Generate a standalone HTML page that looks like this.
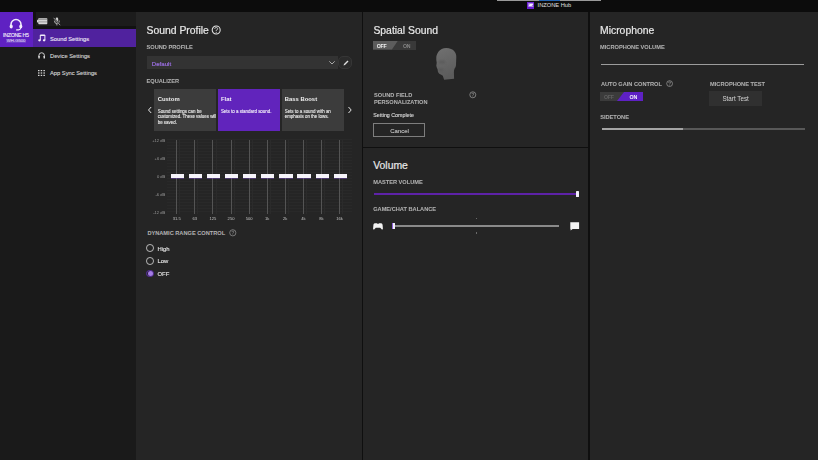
<!DOCTYPE html>
<html><head><meta charset="utf-8">
<style>
*{margin:0;padding:0;box-sizing:border-box}
html,body{width:818px;height:460px;overflow:hidden;background:#0c0c0c}
body{position:relative;font-family:"Liberation Sans",sans-serif;color:#ddd}
.a{position:absolute}
.t{position:absolute;white-space:nowrap;line-height:1}
.h{font-size:10.4px;color:#e8e8e8;-webkit-text-stroke:0.2px #e8e8e8;margin-top:1px}
.l{font-size:5.65px;font-weight:700;color:#b0b0b0;margin-top:0.8px}
.b{font-size:5.8px;color:#d8d8d8;-webkit-text-stroke:0.12px currentColor}
.l{-webkit-text-stroke:0.05px currentColor}
</style></head><body><div id="w" style="position:absolute;left:0;top:0;width:818px;height:460px;filter:blur(0.4px)">
<!-- top bar -->
<div class="a" style="left:0;top:0;width:818px;height:12px;background:#0c0c0c"></div>
<div class="a" style="left:497px;top:0;width:104px;height:1px;background:#9a9a9a"></div>
<div class="a" style="left:539px;top:0;width:21px;height:1px;background:#2463b0"></div>
<div class="a" style="left:527px;top:2.2px;width:7.3px;height:7px;background:#6a1fd0"></div>
<svg class="a" style="left:527px;top:2.2px" width="8" height="7" viewBox="0 0 8 7"><path d="M1.2 1.6 H6.2 L6.2 2.4 L4.6 3.8 H6.4 V4.6 H1.2 V3.8 L2.9 2.4 H1.2z" fill="#f4f0ff"/></svg>
<div class="t" style="left:537.6px;top:3px;font-size:5.7px;color:#e0e0e0">INZONE Hub</div>

<!-- sidebar -->
<div class="a" style="left:0;top:12px;width:136px;height:448px;background:#1a1a1a"></div>
<div class="a" style="left:0;top:12px;width:33px;height:34.5px;background:#5f21c2"></div>
<div class="a" style="left:33px;top:12px;width:103px;height:14px;background:#1c1c1c"></div>
<div class="a" style="left:33px;top:26px;width:103px;height:3px;background:#121212"></div>
<div class="a" style="left:33px;top:12px;width:2.5px;height:14px;background:#111"></div>
<div class="a" style="left:33px;top:29px;width:103px;height:17.5px;background:#50229e"></div>


<!-- sidebar content -->
<svg class="a" style="left:9px;top:18px" width="14" height="14" viewBox="0 0 14 14">
 <path d="M2 8 V6.6 A5 5 0 0 1 12 6.6 V8" fill="none" stroke="#f3eefc" stroke-width="1.5"/>
 <ellipse cx="2.2" cy="8.4" rx="1.55" ry="2" fill="#f3eefc"/>
 <ellipse cx="11.8" cy="8.4" rx="1.55" ry="2" fill="#f3eefc"/>
 <path d="M11.6 10 Q11.4 11.8 9.6 11.9 H7.6" fill="none" stroke="#f3eefc" stroke-width="1.1" stroke-linecap="round"/>
</svg>
<div class="t" style="left:3px;top:32.6px;font-size:5.3px;letter-spacing:-0.3px;color:#eee6f8;-webkit-text-stroke:0.15px #eee6f8">INZONE H5</div>
<div class="a" style="left:6px;top:38.8px;width:20px;height:4.6px;background:#6d3dc8"></div>
<div class="t" style="left:6.8px;top:39.2px;font-size:4.2px;color:#f1eaf9">WH-G500</div>

<svg class="a" style="left:36.7px;top:17.7px" width="11" height="7" viewBox="0 0 11 7">
 <rect x="1.3" y="0.2" width="9" height="6" rx="0.6" fill="#d8d8d8"/>
 <rect x="0" y="1.8" width="1.6" height="2.6" rx="0.4" fill="#d8d8d8"/>
 <g fill="#3a3a3a"><rect x="2.55" y="1.1500000000000001" width="0.9" height="0.9"/><rect x="4.55" y="1.1500000000000001" width="0.9" height="0.9"/><rect x="6.55" y="1.1500000000000001" width="0.9" height="0.9"/><rect x="8.55" y="1.1500000000000001" width="0.9" height="0.9"/><rect x="2.55" y="3.4499999999999997" width="0.9" height="0.9"/><rect x="4.55" y="3.4499999999999997" width="0.9" height="0.9"/><rect x="6.55" y="3.4499999999999997" width="0.9" height="0.9"/><rect x="8.55" y="3.4499999999999997" width="0.9" height="0.9"/></g></svg>
<svg class="a" style="left:53px;top:16.5px" width="8" height="9" viewBox="0 0 8 9">
 <rect x="2.6" y="0.6" width="2.6" height="4.6" rx="1.3" fill="#cfcfcf"/>
 <path d="M1.4 3.6 Q1.4 6.6 3.9 6.6 Q6.4 6.6 6.4 3.6 M3.9 6.6 V8.4" fill="none" stroke="#cfcfcf" stroke-width="0.8"/>
 <path d="M0.6 0.8 L7.2 8.2" stroke="#1c1c1c" stroke-width="1.4"/>
 <path d="M0.6 0.8 L7.2 8.2" stroke="#cfcfcf" stroke-width="0.7"/>
</svg>

<svg class="a" style="left:37.5px;top:33.5px" width="8" height="8" viewBox="0 0 8 8">
 <path d="M2.3 6.2 V1 H6.9 V6.2" fill="none" stroke="#f3eefb" stroke-width="1"/>
 <path d="M2.3 1 H6.9 V2 H2.3z" fill="#f3eefb"/>
 <ellipse cx="1.5" cy="6.3" rx="1.3" ry="1.1" fill="#f3eefb"/>
 <ellipse cx="6.1" cy="6.3" rx="1.3" ry="1.1" fill="#f3eefb"/>
</svg>
<div class="t b" style="left:50px;top:36.6px;font-size:5.75px;color:#ece6f6">Sound Settings</div>

<svg class="a" style="left:37.6px;top:51.6px" width="8" height="7" viewBox="0 0 8 7">
 <path d="M0.9 4.6 V3.5 A2.75 2.75 0 0 1 6.4 3.5 V4.6" fill="none" stroke="#d8d8d8" stroke-width="0.95"/>
 <rect x="0.3" y="3.8" width="1.5" height="2.7" rx="0.5" fill="#d8d8d8"/>
 <rect x="5.5" y="3.8" width="1.5" height="2.7" rx="0.5" fill="#d8d8d8"/>
</svg>
<div class="t b" style="left:50px;top:53.9px;font-size:5.75px;color:#d6d6d6">Device Settings</div>

<svg class="a" style="left:38px;top:69.5px" width="7" height="6" viewBox="0 0 7 6"><g fill="#d8d8d8"><rect x="0" y="0" width="1.5" height="1.2"/><rect x="2.7" y="0" width="1.5" height="1.2"/><rect x="5.4" y="0" width="1.5" height="1.2"/><rect x="0" y="2.4" width="1.5" height="1.2"/><rect x="2.7" y="2.4" width="1.5" height="1.2"/><rect x="5.4" y="2.4" width="1.5" height="1.2"/><rect x="0" y="4.8" width="1.5" height="1.2"/><rect x="2.7" y="4.8" width="1.5" height="1.2"/><rect x="5.4" y="4.8" width="1.5" height="1.2"/></g></svg>
<div class="t b" style="left:50px;top:70.6px;font-size:5.75px;color:#d6d6d6">App Sync Settings</div>

<!-- panels -->
<div class="a" style="left:136px;top:12px;width:226px;height:448px;background:#252525"></div>
<div class="a" style="left:362px;top:12px;width:1px;height:448px;background:#0f0f0f"></div>
<div class="a" style="left:363px;top:12px;width:226px;height:135px;background:#252525"></div>
<div class="a" style="left:363px;top:147px;width:226px;height:1px;background:#0f0f0f"></div>
<div class="a" style="left:363px;top:148px;width:226px;height:312px;background:#252525"></div>
<div class="a" style="left:588.4px;top:12px;width:1.2px;height:448px;background:#0f0f0f"></div>
<div class="a" style="left:589.6px;top:12px;width:228.4px;height:448px;background:#252525"></div>

<!-- titles -->
<div class="t h" style="left:146.5px;top:25px">Sound Profile</div>
<div class="t h" style="left:373.4px;top:25px">Spatial Sound</div>
<div class="t h" style="left:600px;top:25px">Microphone</div>
<div class="t h" style="left:373.2px;top:159.8px">Volume</div>

<!-- labels -->
<div class="t l" style="left:146.5px;top:44.7px">SOUND PROFILE</div>
<div class="t l" style="left:146.5px;top:78.2px">EQUALIZER</div>
<div class="t l" style="left:147.4px;top:230.2px">DYNAMIC RANGE CONTROL</div>
<div class="t l" style="left:374px;top:91.8px">SOUND FIELD</div>
<div class="t l" style="left:374px;top:99.4px">PERSONALIZATION</div>
<div class="t l" style="left:373.2px;top:179.3px">MASTER VOLUME</div>
<div class="t l" style="left:373.2px;top:206.3px">GAME/CHAT BALANCE</div>
<div class="t l" style="left:600.1px;top:44.7px">MICROPHONE VOLUME</div>
<div class="t l" style="left:600.9px;top:81.2px">AUTO GAIN CONTROL</div>
<div class="t l" style="left:710.1px;top:81px">MICROPHONE TEST</div>
<div class="t l" style="left:600.2px;top:114.5px">SIDETONE</div>


<!-- sound profile panel -->
<svg class="a" style="left:211px;top:25px" width="11" height="10" viewBox="0 0 11 10">
 <circle cx="5.2" cy="5" r="4.0" fill="none" stroke="#e4e4e4" stroke-width="1.05"/>
 <path d="M3.7 3.9 Q3.7 2.5 5.2 2.5 Q6.7 2.5 6.7 3.8 Q6.7 4.7 5.2 5.3 V6.2" fill="none" stroke="#e0e0e0" stroke-width="0.8"/>
 <circle cx="5.2" cy="7.4" r="0.5" fill="#e0e0e0"/>
</svg>
<div class="a" style="left:146.5px;top:56px;width:191.5px;height:12.6px;background:#333"></div>
<div class="t b" style="left:151.8px;top:60.6px;font-size:6.1px;color:#9a6ee0;-webkit-text-stroke:0.2px #9a6ee0">Default</div>
<svg class="a" style="left:328px;top:59.5px" width="8" height="6" viewBox="0 0 8 6">
 <path d="M1.3 1.3 L4 4 L6.7 1.3" fill="none" stroke="#d0d0d0" stroke-width="0.75"/>
</svg>
<div class="a" style="left:338.3px;top:56.4px;width:13.4px;height:13px;background:#2b2b2b;border:0.6px solid #363636;border-radius:5px"></div>
<svg class="a" style="left:342px;top:58.5px" width="8" height="8" viewBox="0 0 8 8">
 <path d="M1.5 6.5 L2 5 L5.5 1.5 L6.5 2.5 L3 6 z" fill="#e0e0e0"/>
</svg>

<!-- eq cards -->
<div class="a" style="left:154.2px;top:88.7px;width:62px;height:41.9px;background:#3c3c3c"></div>
<div class="a" style="left:218.2px;top:88.7px;width:62.1px;height:41.9px;background:#6124bc"></div>
<div class="a" style="left:282.3px;top:88.7px;width:62px;height:41.9px;background:#3c3c3c"></div>
<div class="t" style="left:157.7px;top:97.2px;font-size:5.9px;font-weight:700;color:#f0f0f0">Custom</div>
<div class="t" style="left:220.9px;top:97.2px;font-size:5.9px;font-weight:700;color:#f4f0fb">Flat</div>
<div class="t" style="left:284.7px;top:97.2px;font-size:5.9px;font-weight:700;color:#f0f0f0">Bass Boost</div>
<div class="t" style="left:157.7px;top:108.9px;font-size:4.45px;line-height:5.6px;color:#e6e6e6;-webkit-text-stroke:0.12px #e6e6e6;white-space:normal;width:60px">Sound settings can be customized. These values will be saved.</div>
<div class="t" style="left:220.9px;top:108.9px;font-size:4.45px;line-height:5.6px;color:#f0ecf8;-webkit-text-stroke:0.12px #f0ecf8;white-space:normal;width:60px">Sets to a standard sound.</div>
<div class="t" style="left:284.7px;top:108.9px;font-size:4.45px;line-height:5.6px;color:#e6e6e6;-webkit-text-stroke:0.12px #e6e6e6;white-space:normal;width:58px">Sets to a sound with an emphasis on the lows.</div>
<svg class="a" style="left:147.2px;top:105.8px" width="6" height="8" viewBox="0 0 6 8">
 <path d="M4.2 1 L1.5 4 L4.2 7" fill="none" stroke="#e6e6e6" stroke-width="1"/>
</svg>
<svg class="a" style="left:346.5px;top:106px" width="6" height="8" viewBox="0 0 6 8">
 <path d="M1.5 1 L4.2 4 L1.5 7" fill="none" stroke="#e6e6e6" stroke-width="1"/>
</svg>
<!-- eq graph -->
<div class="a" style="left:167px;top:139px;width:185px;height:75px;background-image:repeating-linear-gradient(to bottom,#292929 0,#292929 0.6px,transparent 0.6px,transparent 3px)"></div>
<div class="t" style="left:140px;width:25.3px;text-align:right;top:139.2px;font-size:4.1px;color:#9a9a9a">+12 dB</div>
<div class="t" style="left:140px;width:25.3px;text-align:right;top:157.0px;font-size:4.1px;color:#9a9a9a">+6 dB</div>
<div class="t" style="left:140px;width:25.3px;text-align:right;top:174.8px;font-size:4.1px;color:#9a9a9a">0 dB</div>
<div class="t" style="left:140px;width:25.3px;text-align:right;top:193.0px;font-size:4.1px;color:#9a9a9a">-6 dB</div>
<div class="t" style="left:140px;width:25.3px;text-align:right;top:211.2px;font-size:4.1px;color:#9a9a9a">-12 dB</div>
<div class="a" style="left:176.30px;top:140px;width:1px;height:74px;background:#545454"></div>
<div class="a" style="left:179.40px;top:140px;width:0.6px;height:74px;background:#2b2b2b"></div>
<div class="a" style="left:170.90px;top:174.3px;width:13.2px;height:3.6px;background:#f6f4fa;box-shadow:0 0.4px 0 #7d4fd0"></div>
<div class="t" style="left:166.80px;width:20px;text-align:center;top:217px;font-size:4.1px;color:#c4c4c4">31.5</div>
<div class="a" style="left:194.38px;top:140px;width:1px;height:74px;background:#545454"></div>
<div class="a" style="left:197.48px;top:140px;width:0.6px;height:74px;background:#2b2b2b"></div>
<div class="a" style="left:188.98px;top:174.3px;width:13.2px;height:3.6px;background:#f6f4fa;box-shadow:0 0.4px 0 #7d4fd0"></div>
<div class="t" style="left:184.88px;width:20px;text-align:center;top:217px;font-size:4.1px;color:#c4c4c4">63</div>
<div class="a" style="left:212.46px;top:140px;width:1px;height:74px;background:#545454"></div>
<div class="a" style="left:215.56px;top:140px;width:0.6px;height:74px;background:#2b2b2b"></div>
<div class="a" style="left:207.06px;top:174.3px;width:13.2px;height:3.6px;background:#f6f4fa;box-shadow:0 0.4px 0 #7d4fd0"></div>
<div class="t" style="left:202.96px;width:20px;text-align:center;top:217px;font-size:4.1px;color:#c4c4c4">125</div>
<div class="a" style="left:230.54px;top:140px;width:1px;height:74px;background:#545454"></div>
<div class="a" style="left:233.64px;top:140px;width:0.6px;height:74px;background:#2b2b2b"></div>
<div class="a" style="left:225.14px;top:174.3px;width:13.2px;height:3.6px;background:#f6f4fa;box-shadow:0 0.4px 0 #7d4fd0"></div>
<div class="t" style="left:221.04px;width:20px;text-align:center;top:217px;font-size:4.1px;color:#c4c4c4">250</div>
<div class="a" style="left:248.62px;top:140px;width:1px;height:74px;background:#545454"></div>
<div class="a" style="left:251.72px;top:140px;width:0.6px;height:74px;background:#2b2b2b"></div>
<div class="a" style="left:243.22px;top:174.3px;width:13.2px;height:3.6px;background:#f6f4fa;box-shadow:0 0.4px 0 #7d4fd0"></div>
<div class="t" style="left:239.12px;width:20px;text-align:center;top:217px;font-size:4.1px;color:#c4c4c4">500</div>
<div class="a" style="left:266.70px;top:140px;width:1px;height:74px;background:#545454"></div>
<div class="a" style="left:269.80px;top:140px;width:0.6px;height:74px;background:#2b2b2b"></div>
<div class="a" style="left:261.30px;top:174.3px;width:13.2px;height:3.6px;background:#f6f4fa;box-shadow:0 0.4px 0 #7d4fd0"></div>
<div class="t" style="left:257.20px;width:20px;text-align:center;top:217px;font-size:4.1px;color:#c4c4c4">1k</div>
<div class="a" style="left:284.78px;top:140px;width:1px;height:74px;background:#545454"></div>
<div class="a" style="left:287.88px;top:140px;width:0.6px;height:74px;background:#2b2b2b"></div>
<div class="a" style="left:279.38px;top:174.3px;width:13.2px;height:3.6px;background:#f6f4fa;box-shadow:0 0.4px 0 #7d4fd0"></div>
<div class="t" style="left:275.28px;width:20px;text-align:center;top:217px;font-size:4.1px;color:#c4c4c4">2k</div>
<div class="a" style="left:302.86px;top:140px;width:1px;height:74px;background:#545454"></div>
<div class="a" style="left:305.96px;top:140px;width:0.6px;height:74px;background:#2b2b2b"></div>
<div class="a" style="left:297.46px;top:174.3px;width:13.2px;height:3.6px;background:#f6f4fa;box-shadow:0 0.4px 0 #7d4fd0"></div>
<div class="t" style="left:293.36px;width:20px;text-align:center;top:217px;font-size:4.1px;color:#c4c4c4">4k</div>
<div class="a" style="left:320.94px;top:140px;width:1px;height:74px;background:#545454"></div>
<div class="a" style="left:324.04px;top:140px;width:0.6px;height:74px;background:#2b2b2b"></div>
<div class="a" style="left:315.54px;top:174.3px;width:13.2px;height:3.6px;background:#f6f4fa;box-shadow:0 0.4px 0 #7d4fd0"></div>
<div class="t" style="left:311.44px;width:20px;text-align:center;top:217px;font-size:4.1px;color:#c4c4c4">8k</div>
<div class="a" style="left:339.02px;top:140px;width:1px;height:74px;background:#545454"></div>
<div class="a" style="left:342.12px;top:140px;width:0.6px;height:74px;background:#2b2b2b"></div>
<div class="a" style="left:333.62px;top:174.3px;width:13.2px;height:3.6px;background:#f6f4fa;box-shadow:0 0.4px 0 #7d4fd0"></div>
<div class="t" style="left:329.52px;width:20px;text-align:center;top:217px;font-size:4.1px;color:#c4c4c4">16k</div>
<svg class="a" style="left:229px;top:229px" width="8" height="8" viewBox="0 0 8 8">
 <circle cx="3.8" cy="3.8" r="3.1" fill="none" stroke="#9a9a9a" stroke-width="0.7"/>
 <path d="M2.8 3.1 Q2.8 2.1 3.8 2.1 Q4.8 2.1 4.8 3 Q4.8 3.6 3.8 4 V4.6" fill="none" stroke="#9a9a9a" stroke-width="0.6"/>
 <circle cx="3.8" cy="5.5" r="0.35" fill="#9a9a9a"/>
</svg>
<div class="a" style="left:146.2px;top:244.3px;width:7.8px;height:7.8px;border-radius:50%;border:0.9px solid #bdbdbd"></div>
<div class="a" style="left:146.2px;top:256.9px;width:7.8px;height:7.8px;border-radius:50%;border:0.9px solid #bdbdbd"></div>
<div class="a" style="left:146.2px;top:269.5px;width:7.8px;height:7.8px;border-radius:50%;border:0.9px solid #5a2da6;background:#2a2433"></div>
<div class="a" style="left:147.6px;top:270.9px;width:5px;height:5px;border-radius:50%;background:#a47ce6"></div>
<div class="t b" style="left:157.5px;top:246.6px;font-size:5.9px;color:#e4e4e4">High</div>
<div class="t b" style="left:157.5px;top:259.3px;font-size:5.9px;color:#e4e4e4">Low</div>
<div class="t b" style="left:157.5px;top:271.9px;font-size:5.9px;color:#e4e4e4">OFF</div>


<!-- spatial sound -->
<div class="a" style="left:372.7px;top:41px;width:43.2px;height:8.6px;background:#393939"></div>
<div class="a" style="left:372.7px;top:41px;width:25px;height:8.6px;background:#5c5c5c;clip-path:polygon(0 0,100% 0,77% 100%,0 100%)"></div>
<div class="t" style="left:376.7px;top:43.8px;font-size:5.2px;font-weight:700;letter-spacing:-0.25px;color:#f0f0f0">OFF</div>
<div class="t" style="left:403px;top:43.8px;font-size:5.2px;font-weight:700;letter-spacing:-0.2px;color:#858585">ON</div>
<svg class="a" style="left:428px;top:44px" width="36" height="40" viewBox="0 0 36 40">
 <defs><linearGradient id="hg" x1="0" y1="0" x2="0.3" y2="1"><stop offset="0" stop-color="#717171"/><stop offset="1" stop-color="#5c5c5c"/></linearGradient>
 <filter id="hb" x="-50%" y="-50%" width="200%" height="200%"><feGaussianBlur stdDeviation="0.8"/></filter></defs>
 <path d="M18.3 3.9 C22 3.9 24.6 5.2 26.1 7 C27.8 9 28.4 11 28.3 13 L28 20.9 C27.8 22.6 27.3 23.8 26.5 24.8 C26 26 25.8 27.3 25.9 28.7 L26.1 34.8 L16.1 35.7 L14.8 31.7 C13.8 31 12.6 30.7 11.7 30 C10.8 29.4 10.2 28.6 10 27.8 L9.6 25.2 C9 24.2 8.4 23 8.3 21.7 C8.5 20.6 8.6 19.7 8.7 18.7 C8.3 16.8 8.2 14.9 8.3 13 C8.6 11.2 9.4 9.3 10.4 7.8 C12.2 5.4 14.8 3.9 18.3 3.9z" fill="url(#hg)"/>
 <ellipse cx="14" cy="18" rx="3.2" ry="1.5" fill="#5a5a5a" filter="url(#hb)"/>
 <ellipse cx="13" cy="26" rx="2.5" ry="1.4" fill="#585858" filter="url(#hb)"/>
</svg>
<svg class="a" style="left:469.2px;top:90.8px" width="8" height="8" viewBox="0 0 8 8">
 <circle cx="3.8" cy="3.8" r="3.0" fill="none" stroke="#a0a0a0" stroke-width="0.7"/>
 <path d="M2.8 3.1 Q2.8 2.1 3.8 2.1 Q4.8 2.1 4.8 3 Q4.8 3.6 3.8 4 V4.6" fill="none" stroke="#a0a0a0" stroke-width="0.6"/>
 <circle cx="3.8" cy="5.5" r="0.35" fill="#a0a0a0"/>
</svg>
<div class="t b" style="left:373.3px;top:112.6px;font-size:5.3px;color:#dcdcdc">Setting Complete</div>
<div class="a" style="left:373px;top:123.4px;width:51.7px;height:13.2px;border:1px solid #7e7e7e"></div>
<div class="t b" style="left:390.2px;top:128.2px;font-size:6px;color:#e0e0e0;-webkit-text-stroke:0">Cancel</div>

<!-- volume -->
<div class="a" style="left:374px;top:193px;width:203px;height:2.4px;background:#5e22a8"></div>
<div class="a" style="left:575.8px;top:190.8px;width:3.2px;height:6.5px;background:#f2eefa;border-radius:0.6px"></div>
<div class="a" style="left:395px;top:225.1px;width:164px;height:1.6px;background:#8a8a8a"></div>
<div class="a" style="left:392.1px;top:222.6px;width:3px;height:6.5px;background:#f2eefa;border-left:0.6px solid #8e62dc"></div>
<div class="a" style="left:475.7px;top:217.5px;width:0.8px;height:1.6px;background:#6a6a6a"></div>
<div class="a" style="left:475.7px;top:232.4px;width:0.8px;height:1.6px;background:#6a6a6a"></div>
<svg class="a" style="left:373.4px;top:222.6px" width="10" height="7" viewBox="0 0 10 7">
 <path d="M1.8 0.3 H4.2 L4.7 0.9 H5.3 L5.8 0.3 H8.2 C9 0.3 9.4 1 9.6 2 L9.9 5.4 C10 6.4 9.2 6.8 8.6 6.2 L7.2 4.8 H2.8 L1.4 6.2 C0.8 6.8 0 6.4 0.1 5.4 L0.4 2 C0.6 1 1 0.3 1.8 0.3z" fill="#f2f2f2"/>
</svg>
<svg class="a" style="left:569.6px;top:221.6px" width="10" height="9" viewBox="0 0 10 9">
 <path d="M0.3 0.3 H9.1 V7 H2.6 L0.6 8.6 V7 H0.3z" fill="#f4f4f4"/>
</svg>

<!-- microphone -->
<div class="a" style="left:601.4px;top:63.5px;width:203px;height:1.8px;background:#9c9c9c"></div>
<svg class="a" style="left:665.5px;top:80px" width="8" height="8" viewBox="0 0 8 8">
 <circle cx="3.6" cy="3.6" r="2.9" fill="none" stroke="#a0a0a0" stroke-width="0.7"/>
 <path d="M2.6 2.9 Q2.6 1.9 3.6 1.9 Q4.6 1.9 4.6 2.8 Q4.6 3.4 3.6 3.8 V4.4" fill="none" stroke="#a0a0a0" stroke-width="0.6"/>
 <circle cx="3.6" cy="5.3" r="0.35" fill="#a0a0a0"/>
</svg>
<div class="a" style="left:600.2px;top:92px;width:42.8px;height:9.1px;background:#3b3b3b"></div>
<div class="a" style="left:617px;top:92px;width:26px;height:9.1px;background:#5e21c4;clip-path:polygon(27% 0,100% 0,100% 100%,0 100%)"></div>
<div class="t" style="left:604px;top:94.6px;font-size:5.2px;font-weight:700;letter-spacing:-0.25px;color:#606060">OFF</div>
<div class="t" style="left:629.5px;top:94.6px;font-size:5.3px;font-weight:700;color:#f4f0fb">ON</div>
<div class="a" style="left:709.4px;top:91.4px;width:52.2px;height:15px;background:#303030"></div>
<div class="t b" style="left:722.4px;top:96.2px;font-size:6.3px;letter-spacing:0px;color:#d4d4d4;-webkit-text-stroke:0">Start Test</div>
<div class="a" style="left:601.5px;top:128.2px;width:203px;height:1.8px;background:#585858"></div>
<div class="a" style="left:601.5px;top:128.2px;width:81.6px;height:1.8px;background:#a4a4a4"></div>

</div></body></html>
